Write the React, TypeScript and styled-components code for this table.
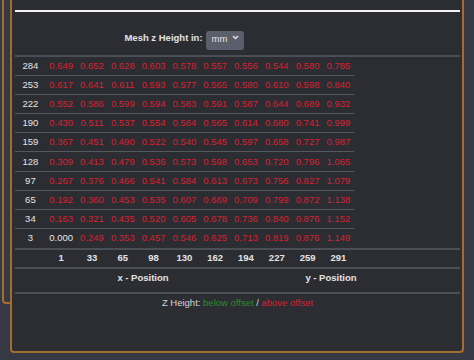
import React from 'react';
import styled, { createGlobalStyle } from 'styled-components';

const GlobalStyle = createGlobalStyle`
  html, body {
    margin: 0;
    padding: 0;
    background: #363943;
    font-family: "Liberation Sans", Arial, sans-serif;
    overflow: hidden;
  }
`;

const ORANGE = '#a56d2c';
const RED = '#d9202f';
const GREEN = '#2d8a2d';

// Data
const yPositions = [284, 253, 222, 190, 159, 128, 97, 65, 34, 3];
const xPositions = [1, 33, 65, 98, 130, 162, 194, 227, 259, 291];

const mesh: number[][] = [
  [0.649, 0.652, 0.628, 0.603, 0.578, 0.557, 0.556, 0.544, 0.58, 0.785],
  [0.617, 0.641, 0.611, 0.593, 0.577, 0.565, 0.58, 0.61, 0.598, 0.84],
  [0.552, 0.586, 0.599, 0.594, 0.583, 0.591, 0.587, 0.644, 0.689, 0.932],
  [0.43, 0.511, 0.537, 0.554, 0.564, 0.565, 0.614, 0.68, 0.741, 0.999],
  [0.367, 0.451, 0.49, 0.522, 0.54, 0.545, 0.597, 0.658, 0.727, 0.987],
  [0.309, 0.413, 0.479, 0.536, 0.573, 0.598, 0.653, 0.72, 0.796, 1.065],
  [0.267, 0.376, 0.466, 0.541, 0.584, 0.613, 0.673, 0.756, 0.827, 1.079],
  [0.192, 0.36, 0.453, 0.535, 0.607, 0.669, 0.709, 0.799, 0.872, 1.138],
  [0.163, 0.321, 0.435, 0.52, 0.605, 0.678, 0.736, 0.84, 0.876, 1.152],
  [0, 0.249, 0.353, 0.457, 0.546, 0.625, 0.713, 0.819, 0.876, 1.149],
];

// Layout
const Page = styled.div`
  position: relative;
  height: 360px;
`;

// parent card peeking out behind the panel
const BackFrame = styled.div`
  position: absolute;
  left: 2px;
  top: -20px;
  width: 60px;
  height: 324px;
  box-sizing: border-box;
  border: 2px solid ${ORANGE};
  border-radius: 4px;
  z-index: 0;
`;

const Panel = styled.div`
  position: relative;
  z-index: 1;
  box-sizing: border-box;
  margin: 0 10px;
  height: 353px;
  padding: 10px 2px 0 3px;
  background: #2c2d33;
  border: 2px solid ${ORANGE};
  border-top: none;
  border-radius: 0 0 4px 4px;
  display: flex;
  flex-direction: column;
`;

const Rule = styled.div<{ $color?: string }>`
  height: 2px;
  background: ${({ $color }) => $color || '#4b4e56'};
`;

const MeshHeader = styled.div`
  width: 338px;
  padding: 16px 0 8px;
  display: flex;
  justify-content: center;
  align-items: center;
  gap: 3px;
`;

const HeaderLabel = styled.span`
  font-size: 9.5px;
  font-weight: 700;
  color: #e2e2e2;
`;

const SelectWrap = styled.div`
  position: relative;
  width: 38px;
  height: 19px;
`;

const UnitSelect = styled.select`
  appearance: none;
  width: 100%;
  height: 100%;
  border: none;
  border-radius: 3px;
  background: #5b5f6c;
  color: #e4e4e4;
  font-family: "Liberation Sans", Arial, sans-serif;
  font-size: 9.5px;
  padding: 0 0 3px 6px;
  outline: none;
`;

const Chevron = styled.svg`
  position: absolute;
  right: 5px;
  top: 7px;
  pointer-events: none;
`;

const Grid = styled.div`
  width: 339px;
  display: flex;
  flex-direction: column;
`;

const Row = styled.div<{ $last?: boolean }>`
  display: grid;
  grid-template-columns: repeat(11, 30.8px);
  align-items: center;
  height: 19.1px;
  box-sizing: border-box;
  border-bottom: ${({ $last }) => ($last ? 'none' : '1px solid #55585f')};
`;

const Cell = styled.span<{ $color?: string; $bold?: boolean }>`
  text-align: center;
  font-size: 9.5px;
  line-height: 12px;
  color: ${({ $color }) => $color || '#e4e4e4'};
  font-weight: ${({ $bold }) => ($bold ? 700 : 400)};
`;

const AxisRow = styled.div`
  display: grid;
  grid-template-columns: repeat(11, 30.8px);
  align-items: center;
  height: 17px;
`;

const PositionRow = styled.div`
  display: grid;
  grid-template-columns: 256px 120px;
  padding: 3px 0 8px;
`;

const PositionLabel = styled.span`
  text-align: center;
  font-size: 9.5px;
  line-height: 12px;
  font-weight: 700;
  color: #e4e4e4;
`;

const Legend = styled.div`
  padding-top: 3px;
  text-align: center;
  font-size: 9.5px;
  line-height: 12px;
  color: #d4d4d4;
`;

const Tone = styled.span<{ $color: string }>`
  color: ${({ $color }) => $color};
`;

const valueColor = (v: number) => (v === 0 ? '#e4e4e4' : v < 0 ? GREEN : RED);

const App: React.FC = () => (
  <>
    <GlobalStyle />
    <Page>
      <BackFrame />
      <Panel>
        <Rule $color="#f2f2f2" />
        <MeshHeader>
          <HeaderLabel>Mesh z Height in:</HeaderLabel>
          <SelectWrap>
            <UnitSelect defaultValue="mm">
              <option value="mm">mm</option>
              <option value="um">µm</option>
            </UnitSelect>
            <Chevron width="7" height="5" viewBox="0 0 7 5">
              <path d="M1 1l2.5 2.5L6 1" fill="none" stroke="#e4e4e4" strokeWidth="1.4" />
            </Chevron>
          </SelectWrap>
        </MeshHeader>
        <Rule />
        <Grid>
          {mesh.map((row, i) => (
            <Row key={yPositions[i]} $last={i === mesh.length - 1}>
              <Cell>{yPositions[i]}</Cell>
              {row.map((v, j) => (
                <Cell key={j} $color={valueColor(v)}>
                  {v.toFixed(3)}
                </Cell>
              ))}
            </Row>
          ))}
        </Grid>
        <Rule />
        <AxisRow>
          <Cell />
          {xPositions.map((x) => (
            <Cell key={x} $bold>
              {x}
            </Cell>
          ))}
        </AxisRow>
        <Rule />
        <PositionRow>
          <PositionLabel>x - Position</PositionLabel>
          <PositionLabel>y - Position</PositionLabel>
        </PositionRow>
        <Rule />
        <Legend>
          Z Height: <Tone $color={GREEN}>below offset</Tone> / <Tone $color={RED}>above offset</Tone>
        </Legend>
      </Panel>
    </Page>
  </>
);

export default App;
